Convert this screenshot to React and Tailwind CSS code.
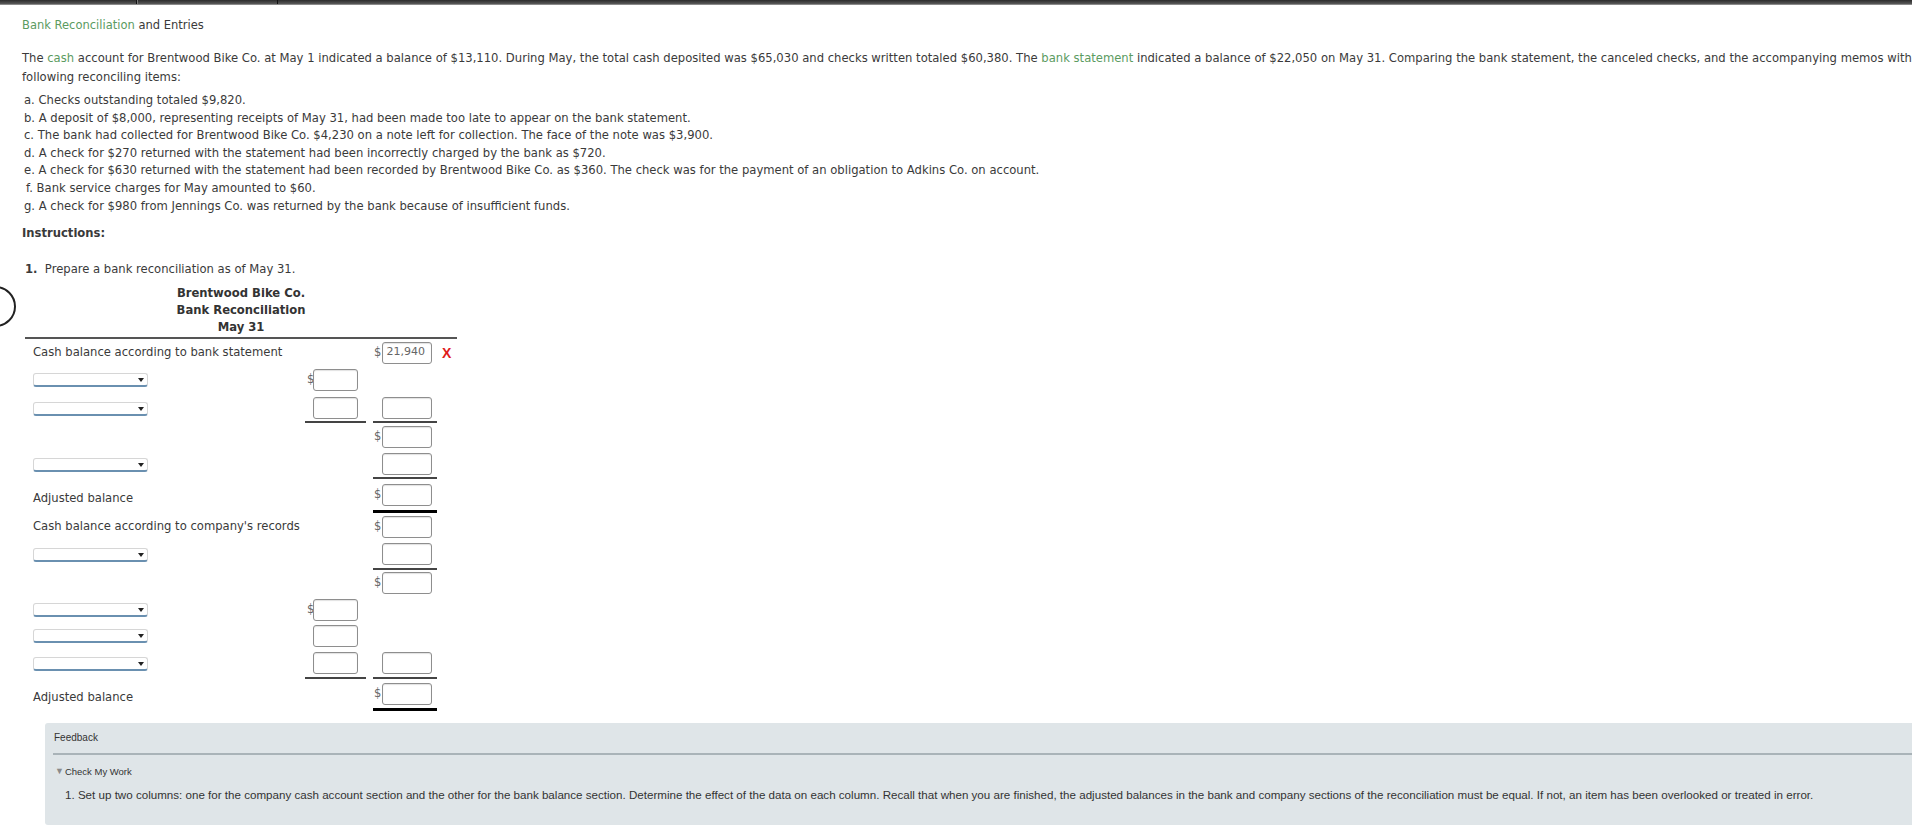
import React from 'react';

const items = [
  'a. Checks outstanding totaled $9,820.',
  'b. A deposit of $8,000, representing receipts of May 31, had been made too late to appear on the bank statement.',
  'c. The bank had collected for Brentwood Bike Co. $4,230 on a note left for collection. The face of the note was $3,900.',
  'd. A check for $270 returned with the statement had been incorrectly charged by the bank as $720.',
  'e. A check for $630 returned with the statement had been recorded by Brentwood Bike Co. as $360. The check was for the payment of an obligation to Adkins Co. on account.',
  'f. Bank service charges for May amounted to $60.',
  'g. A check for $980 from Jennings Co. was returned by the bank because of insufficient funds.',
];

// one row of the reconciliation grid
const rows = [
  { h: 'h-[27px]', label: 'Cash balance according to bank statement', c2: { dollar: true, value: '21,940' }, wrong: true },
  { h: 'h-[28px]', select: true, c1: { dollar: true } },
  { h: 'h-[29px]', select: true, c1: {}, c2: {}, line1: 'border-b-2', line2: 'border-b-2' },
  { h: 'h-[28px]', c2: { dollar: true } },
  { h: 'h-[28px]', select: true, c2: {}, line2: 'border-b-2' },
  { h: 'h-[34px]', label: 'Adjusted balance', labelPad: 'pt-[6px]', c2: { dollar: true }, line2: 'border-b-[3px] border-black' },
  { h: 'h-[27px]', label: "Cash balance according to company's records", c2: { dollar: true } },
  { h: 'h-[30px]', select: true, c2: {}, line2: 'border-b-2' },
  { h: 'h-[26px]', c2: { dollar: true } },
  { h: 'h-[27px]', select: true, c1: { dollar: true } },
  { h: 'h-[26px]', select: true, c1: {} },
  { h: 'h-[30px]', select: true, c1: {}, c2: {}, line1: 'border-b-2', line2: 'border-b-2' },
  { h: 'h-[32px]', label: 'Adjusted balance', labelPad: 'pt-[5px]', c2: { dollar: true }, line2: 'border-b-[3px] border-black' },
];

function AmountBox({ dollar, value, wide }) {
  return (
    <div className="flex items-center">
      <span className={`${wide ? 'w-[8px]' : 'w-[6px]'} text-[11.5px] leading-none text-[#666] ${dollar ? '' : 'invisible'}`}>$</span>
      <div
        className={`h-[22px] ${wide ? 'w-[50px]' : 'w-[45px]'} rounded-[3px] border border-[#8e8e8e] bg-white shadow-[inset_0_1px_1px_rgba(0,0,0,0.12)] flex items-center justify-end pr-[6px] text-[11px] text-[#666]`}
      >
        {value}
      </div>
    </div>
  );
}

function SelectBox() {
  return (
    <div className="relative h-[14px] w-[115px] rounded-[3px] border border-[#d6d6d6] border-b-2 border-b-[#6a90b0] bg-white">
      <span className="absolute right-[3px] top-[4px] h-0 w-0 border-l-[3px] border-r-[3px] border-t-[4px] border-l-transparent border-r-transparent border-t-[#222]" />
    </div>
  );
}

function RecRow({ row }) {
  return (
    <div className={`grid grid-cols-[280px_61px_7px_64px_20px] ${row.h}`}>
      <div className={`flex items-center pl-[8px] ${row.labelPad || ''}`}>
        {row.label && <span className="whitespace-nowrap">{row.label}</span>}
        {row.select && <SelectBox />}
      </div>
      <div className={`flex items-center pl-[2px] ${row.line1 ? row.line1 + ' border-[#444]' : ''}`}>
        {row.c1 && <AmountBox {...row.c1} />}
      </div>
      <div />
      <div className={`flex items-center pl-[1px] ${row.line2 ? (row.line2.includes('black') ? row.line2 : row.line2 + ' border-[#444]') : ''}`}>
        {row.c2 && <AmountBox {...row.c2} wide />}
      </div>
      <div className="flex items-center pl-[5px]">
        {row.wrong && <span className="font-['Liberation_Sans',Arial,sans-serif] text-[14px] font-bold leading-none text-[#e01b1b]">X</span>}
      </div>
    </div>
  );
}

export default function App() {
  return (
    <div className="min-h-[832px] w-full overflow-hidden bg-white font-['DejaVu_Sans',Verdana,sans-serif] text-[11.6px] text-[#3a3a3a]">
      {/* top strip */}
      <div className="flex h-[5px] bg-gradient-to-b from-[#2c2c2c] to-[#5a5a5a] border-b border-[#8a8a8a]">
        <div className="w-[137px] border-r border-[#111]" />
        <div className="w-[141px] border-r border-[#111] border-l border-l-[#777]" />
      </div>

      <div className="pl-[22px]">
        <h1 className="mt-[12px] leading-[17px] text-[11.5px]">
          <span className="text-[#5b9b5f]">Bank Reconciliation</span> and Entries
        </h1>

        <p className="mt-[15px] leading-[19px]">
          <span className="whitespace-nowrap">
            The <span className="text-[#5b9b5f]">cash</span> account for Brentwood Bike Co. at May 1 indicated a balance of $13,110. During May, the total cash deposited was $65,030 and checks written totaled $60,380. The <span className="text-[#5b9b5f]">bank statement</span> indicated a balance of $22,050 on May 31. Comparing the bank statement, the canceled checks, and the accompanying memos with
          </span>
          <br />
          following reconciling items:
        </p>

        <ul className="mt-[5px] pl-[2px] leading-[17.6px]">
          {items.map((t) => (
            <li key={t} className={t.startsWith('f.') ? 'pl-[2px]' : ''}>{t}</li>
          ))}
        </ul>

        <p className="mt-[10px] leading-[17px] font-bold">Instructions:</p>

        <p className="mt-[19px] pl-[3px] leading-[17px]">
          <span className="font-bold">1.</span>&nbsp; Prepare a bank reconciliation as of May 31.
        </p>
      </div>

      <div className="mt-[7px] flex items-start">
        <div className="ml-[-25px] mt-[1px] h-[41px] w-[41px] shrink-0 rounded-full border-2 border-[#222]" />
        <div className="ml-[9px] w-[432px]">
          <div className="border-b-2 border-[#555] pb-[1px] text-center font-bold leading-[17px] text-[#333]">
            <div>Brentwood Bike Co.</div>
            <div>Bank Reconciliation</div>
            <div>May 31</div>
          </div>
          {rows.map((row, i) => (
            <RecRow key={i} row={row} />
          ))}
        </div>
      </div>

      <div className="ml-[45px] mt-[12px] rounded-l-[3px] bg-[#dfe5e8] pb-[23px] pt-[8px] font-['Liberation_Sans',Arial,sans-serif] text-[#333]">
        <div className="pl-[9px] text-[10px] leading-[14px]">Feedback</div>
        <div className="ml-[8px] mt-[8px] border-t-2 border-[#a9b3b8]" />
        <div className="mt-[10px] flex items-center pl-[10px] text-[9.5px] leading-[13px]">
          <span className="mr-[1px] text-[9px] leading-none text-[#8a8a8a]">▼</span>Check My Work
        </div>
        <div className="mt-[10px] pl-[20px] text-[11.6px] leading-[14px]">
          1. Set up two columns: one for the company cash account section and the other for the bank balance section. Determine the effect of the data on each column. Recall that when you are finished, the adjusted balances in the bank and company sections of the reconciliation must be equal. If not, an item has been overlooked or treated in error.
        </div>
      </div>
    </div>
  );
}
